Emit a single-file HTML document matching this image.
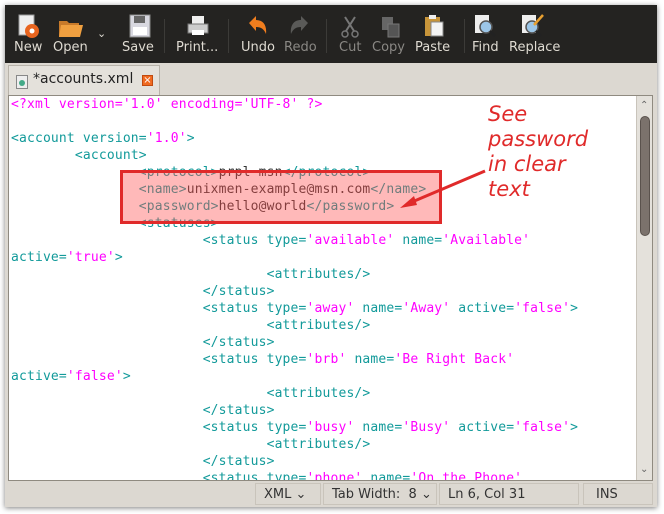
<!DOCTYPE html>
<html><head><style>
*{margin:0;padding:0;box-sizing:border-box}
body{width:664px;height:514px;background:#fff;position:relative;overflow:hidden;font-family:"DejaVu Sans","Liberation Sans",sans-serif}
.win{position:absolute;left:5px;top:5px;width:652px;height:502px;background:#dcd8d1;box-shadow:0 1px 5px rgba(0,0,0,.5)}
.tb{position:absolute;left:0;top:0;width:652px;height:58px;background:#242321}
.btn{position:absolute;top:35px;font-size:13px;color:#dfdbd2}
.dis{color:#8a8884}
.ic{position:absolute}
.sep{position:absolute;top:14px;width:1px;height:34px;background:#3c3b38}
.tab{position:absolute;left:3px;top:60px;width:152px;height:32px;background:#e4e1db;border:1px solid #b8b3aa;border-bottom:none;font-size:14px;color:#222}
.ed{position:absolute;left:3px;top:90px;width:645px;height:386px;background:#fff;border:1px solid #8f8a80;overflow:hidden}
pre{position:absolute;left:2px;top:0;font-family:"DejaVu Sans Mono","Liberation Mono",monospace;font-size:13px;letter-spacing:0.16px;line-height:17px;color:#333;tab-size:8}
.t{color:#129a9a}.v{color:#f0f}
.sb{position:absolute;right:0;top:0;width:16px;height:384px;background:#e4e1db;border-left:1px solid #c9c4bb}
.th{position:absolute;left:3px;top:20px;width:10px;height:120px;background:#7b726c;border-radius:5px;border:1px solid #5a524d}
.st{position:absolute;top:478px;height:22px;font-size:13px;color:#333;line-height:22px;border:1px solid #c9c4bb;padding-left:8px}
</style></head><body>
<div class="win">
<div class="tb">
 <svg class="ic" style="left:10px;top:8px" width="26" height="26"><rect x="4" y="2" width="15" height="20" fill="#eee" stroke="#999"/><circle cx="17" cy="18" r="7" fill="#e8641e"/><circle cx="17" cy="18" r="2.5" fill="#fff"/></svg>
 <div class="btn" style="left:9px">New</div>
 <svg class="ic" style="left:52px;top:10px" width="28" height="24"><path d="M2 6h8l2 2h10v14H2z" fill="#c87a2a"/><path d="M4 10h22l-3 12H2z" fill="#f0a040"/></svg>
 <div class="btn" style="left:48px">Open</div>
 <div class="btn" style="left:92px;top:22px;font-size:11px">⌄</div>
 <svg class="ic" style="left:123px;top:8px" width="24" height="26"><rect x="2" y="2" width="20" height="22" fill="#d8d8e0" stroke="#888"/><rect x="6" y="3" width="11" height="7" fill="#666"/><rect x="5" y="14" width="14" height="8" fill="#fff"/></svg>
 <div class="btn" style="left:117px">Save</div>
 <div class="sep" style="left:159px"></div>
 <svg class="ic" style="left:181px;top:10px" width="24" height="22"><rect x="6" y="1" width="12" height="9" fill="#eee"/><rect x="2" y="9" width="20" height="9" fill="#ccc" stroke="#777"/><rect x="6" y="15" width="12" height="5" fill="#fff"/></svg>
 <div class="btn" style="left:171px">Print...</div>
 <div class="sep" style="left:223px"></div>
 <svg class="ic" style="left:240px;top:8px" width="24" height="24"><path d="M4 10l7-7v4c7 0 11 5 10 14-2-5-5-7-10-7v4z" fill="#f07d1e"/></svg>
 <div class="btn" style="left:236px">Undo</div>
 <svg class="ic" style="left:283px;top:8px" width="24" height="24"><path d="M20 10l-7-7v4c-7 0-11 5-10 14 2-5 5-7 10-7v4z" fill="#5a5a58"/></svg>
 <div class="btn dis" style="left:279px">Redo</div>
 <div class="sep" style="left:321px"></div>
 <svg class="ic" style="left:335px;top:10px" width="20" height="24"><path d="M5 2l9 14M15 2L6 16" stroke="#777" stroke-width="2"/><circle cx="5" cy="19" r="3" fill="none" stroke="#777" stroke-width="1.5"/><circle cx="15" cy="19" r="3" fill="none" stroke="#777" stroke-width="1.5"/></svg>
 <div class="btn dis" style="left:334px">Cut</div>
 <svg class="ic" style="left:375px;top:10px" width="22" height="24"><rect x="2" y="2" width="11" height="13" fill="#666"/><rect x="8" y="9" width="11" height="13" fill="#555" stroke="#777"/></svg>
 <div class="btn dis" style="left:367px">Copy</div>
 <svg class="ic" style="left:418px;top:8px" width="22" height="26"><rect x="2" y="4" width="15" height="19" fill="#c8953a"/><rect x="6" y="2" width="7" height="4" fill="#eee"/><rect x="8" y="9" width="12" height="14" fill="#f4f4f4" stroke="#888"/></svg>
 <div class="btn" style="left:410px">Paste</div>
 <div class="sep" style="left:459px"></div>
 <svg class="ic" style="left:468px;top:8px" width="24" height="26"><rect x="2" y="2" width="14" height="18" fill="#eee"/><circle cx="13" cy="14" r="6" fill="#9cc6e8" stroke="#555" stroke-width="1.5"/><path d="M17 18l5 5" stroke="#222" stroke-width="2.5"/></svg>
 <div class="btn" style="left:467px">Find</div>
 <svg class="ic" style="left:515px;top:8px" width="26" height="26"><rect x="2" y="2" width="14" height="18" fill="#eee"/><circle cx="12" cy="14" r="6" fill="#9cc6e8" stroke="#555" stroke-width="1.5"/><path d="M16 18l5 5" stroke="#222" stroke-width="2.5"/><path d="M14 12l9-10" stroke="#e8a030" stroke-width="2.5"/></svg>
 <div class="btn" style="left:504px">Replace</div>
</div>
<div class="tab">
 <svg style="position:absolute;left:7px;top:9px" width="12" height="14"><rect x="0.5" y="0.5" width="11" height="13" fill="#eee" stroke="#888"/><circle cx="6" cy="8" r="3" fill="#4a8"/></svg>
 <span style="position:absolute;left:24px;top:5px">*accounts.xml</span>
 <span style="position:absolute;left:133px;top:9px;width:11px;height:11px;background:#f06a20;border:1px solid #c04a10;color:#fff;font-size:10px;line-height:9px;text-align:center">×</span>
</div>
<div class="ed">
<pre><span class="v">&lt;?xml version='1.0' encoding='UTF-8' ?&gt;</span>

<span class="t">&lt;account version=</span><span class="v">'1.0'</span><span class="t">&gt;</span>
	<span class="t">&lt;account&gt;</span>
		<span class="t">&lt;protocol&gt;</span>prpl-msn<span class="t">&lt;/protocol&gt;</span>
		<span class="t">&lt;name&gt;</span>unixmen-example@msn.com<span class="t">&lt;/name&gt;</span>
		<span class="t">&lt;password&gt;</span>hello@world<span class="t">&lt;/password&gt;</span>
		<span class="t">&lt;statuses&gt;</span>
			<span class="t">&lt;status type=</span><span class="v">'available'</span><span class="t"> name=</span><span class="v">'Available'</span>
<span class="t">active=</span><span class="v">'true'</span><span class="t">&gt;</span>
				<span class="t">&lt;attributes/&gt;</span>
			<span class="t">&lt;/status&gt;</span>
			<span class="t">&lt;status type=</span><span class="v">'away'</span><span class="t"> name=</span><span class="v">'Away'</span><span class="t"> active=</span><span class="v">'false'</span><span class="t">&gt;</span>
				<span class="t">&lt;attributes/&gt;</span>
			<span class="t">&lt;/status&gt;</span>
			<span class="t">&lt;status type=</span><span class="v">'brb'</span><span class="t"> name=</span><span class="v">'Be Right Back'</span>
<span class="t">active=</span><span class="v">'false'</span><span class="t">&gt;</span>
				<span class="t">&lt;attributes/&gt;</span>
			<span class="t">&lt;/status&gt;</span>
			<span class="t">&lt;status type=</span><span class="v">'busy'</span><span class="t"> name=</span><span class="v">'Busy'</span><span class="t"> active=</span><span class="v">'false'</span><span class="t">&gt;</span>
				<span class="t">&lt;attributes/&gt;</span>
			<span class="t">&lt;/status&gt;</span>
			<span class="t">&lt;status type=</span><span class="v">'phone'</span><span class="t"> name=</span><span class="v">'On the Phone'</span>
</pre>
<div class="sb"><div style="position:absolute;left:3px;top:4px;font-size:10px;color:#666">⌃</div><div class="th"></div><div style="position:absolute;left:3px;top:368px;font-size:10px;color:#666">⌄</div></div>
</div>
<div class="st" style="left:3px;width:247px;border:none"></div>
<div class="st" style="left:250px;width:66px">XML ⌄</div>
<div class="st" style="left:318px;width:114px">Tab Width:&nbsp; 8 ⌄</div>
<div class="st" style="left:434px;width:140px">Ln 6, Col 31</div>
<div class="st" style="left:578px;width:70px;padding-left:12px">INS</div>
</div>
<div style="position:absolute;left:120px;top:170px;width:322px;height:54px;border:3px solid #e02a2a;background:rgba(255,80,80,.4)"></div>
<svg style="position:absolute;left:0;top:0" width="664" height="514"><path d="M485 171L412 202" stroke="#e02a2a" stroke-width="3"/><path d="M400 208l14-12 3 9z" fill="#e02a2a"/></svg>
<div style="position:absolute;left:488px;top:102px;font-family:'DejaVu Sans',sans-serif;font-style:italic;font-size:21px;line-height:25px;color:#e02a2a">See<br>password<br>in clear<br>text</div>
</body></html>
